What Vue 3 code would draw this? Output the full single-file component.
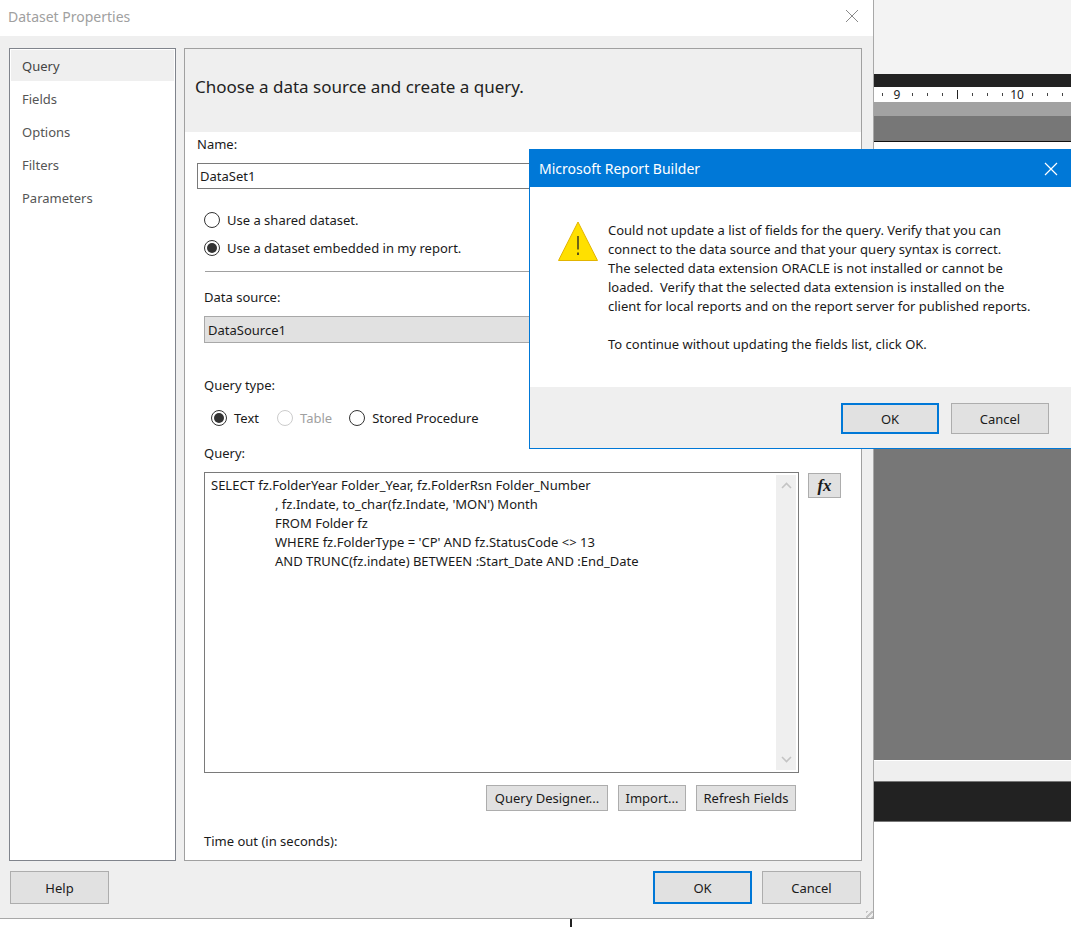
<script setup>
const navItems = ['Query', 'Fields', 'Options', 'Filters', 'Parameters']

const queryLines = [
  { text: 'SELECT fz.FolderYear Folder_Year, fz.FolderRsn Folder_Number', indent: false },
  { text: ', fz.Indate, to_char(fz.Indate, \'MON\') Month', indent: true },
  { text: 'FROM Folder fz', indent: true },
  { text: 'WHERE fz.FolderType = \'CP\' AND fz.StatusCode <> 13', indent: true },
  { text: 'AND TRUNC(fz.indate) BETWEEN :Start_Date AND :End_Date', indent: true }
]

// one cell every 15px, a number or a tick
const rulerCells = ['', '9', '', '', '', '|', '', '', '', '10', '', '', '']
</script>

<template>
  <div class="desktop">
    <!-- report builder window behind the dialogs -->
    <div class="backdrop">
      <div class="bd-top"></div>
      <div class="bd-black"></div>
      <div class="ruler">
        <div v-for="(cell, i) in rulerCells" :key="i" class="ruler-cell">
          <i v-if="cell === ''" class="tick"></i>
          <i v-else-if="cell === '|'" class="tick tall"></i>
          <span v-else class="ruler-num">{{ cell }}</span>
        </div>
      </div>
      <div class="bd-gray"></div>
      <div class="bd-dark-top"></div>
      <div class="bd-gap"></div>
      <div class="bd-dark"></div>
      <div class="bd-light"></div>
      <div class="bd-footer"></div>
    </div>
    <div class="stem"></div>

    <!-- Dataset Properties -->
    <div class="dialog">
      <div class="dialog-title">
        <span>Dataset Properties</span>
        <svg class="close" width="14" height="14" viewBox="0 0 14 14">
          <path d="M1 1 L13 13 M13 1 L1 13" stroke="#8a8a8a" stroke-width="1" fill="none" />
        </svg>
      </div>
      <div class="dialog-body">
        <div class="columns">
          <nav class="nav">
            <div
              v-for="(item, i) in navItems"
              :key="item"
              class="nav-item"
              :class="{ active: i === 0 }"
            >{{ item }}</div>
          </nav>
          <section class="panel">
            <div class="panel-head">Choose a data source and create a query.</div>
            <div class="panel-body">
              <div class="label name-label">Name:</div>
              <div class="input">DataSet1</div>
              <div class="radios">
                <label class="radio"><i class="dot"></i>Use a shared dataset.</label>
                <label class="radio"><i class="dot on"></i>Use a dataset embedded in my report.</label>
              </div>
              <div class="rule"></div>
              <div class="inset">
                <div class="label source-label">Data source:</div>
                <div class="select">DataSource1</div>
                <div class="label type-label">Query type:</div>
                <div class="type-row">
                  <label class="radio"><i class="dot on"></i>Text</label>
                  <label class="radio off"><i class="dot"></i>Table</label>
                  <label class="radio"><i class="dot"></i>Stored Procedure</label>
                </div>
                <div class="label query-label">Query:</div>
                <div class="query-row">
                  <div class="query">
                    <div class="query-text">
                      <div
                        v-for="(line, i) in queryLines"
                        :key="i"
                        class="query-line"
                        :class="{ indent: line.indent }"
                      >{{ line.text }}</div>
                    </div>
                    <div class="scrollbar">
                      <svg width="11" height="7" viewBox="0 0 11 7">
                        <path d="M1 6 L5.5 1.5 L10 6" stroke="#c4c4c4" stroke-width="1.6" fill="none" />
                      </svg>
                      <svg width="11" height="7" viewBox="0 0 11 7">
                        <path d="M1 1 L5.5 5.5 L10 1" stroke="#c4c4c4" stroke-width="1.6" fill="none" />
                      </svg>
                    </div>
                  </div>
                  <button class="btn fx">fx</button>
                </div>
                <div class="query-actions">
                  <button class="btn small designer">Query Designer...</button>
                  <button class="btn small import">Import...</button>
                  <button class="btn small refresh">Refresh Fields</button>
                </div>
                <div class="label timeout-label">Time out (in seconds):</div>
              </div>
            </div>
          </section>
        </div>
        <div class="dialog-footer">
          <button class="btn wide">Help</button>
          <div class="footer-right">
            <button class="btn wide primary">OK</button>
            <button class="btn wide">Cancel</button>
          </div>
        </div>
        <div class="grip"></div>
      </div>
    </div>

    <!-- message box -->
    <div class="msgbox">
      <div class="msg-title">
        <span>Microsoft Report Builder</span>
        <svg class="msg-close" width="14" height="14" viewBox="0 0 14 14">
          <path d="M1 1 L13 13 M13 1 L1 13" stroke="#fff" stroke-width="1.2" fill="none" />
        </svg>
      </div>
      <div class="msg-body">
        <svg class="warn" width="40" height="40" viewBox="0 0 40 40">
          <path d="M20 1 L39.5 39.5 L0.5 39.5 Z" fill="#ffe000" stroke="#e2b400" stroke-width="1" />
          <path d="M20 15 V28.5" stroke="#222" stroke-width="1.3" />
          <path d="M20 31.5 V34" stroke="#222" stroke-width="1.5" />
        </svg>
        <div class="msg-text">
          <p>Could not update a list of fields for the query. Verify that you can<br>connect to the data source and that your query syntax is correct.<br>The selected data extension ORACLE is not installed or cannot be<br>loaded.&nbsp; Verify that the selected data extension is installed on the<br>client for local reports and on the report server for published reports.</p>
          <p>To continue without updating the fields list, click OK.</p>
        </div>
      </div>
      <div class="msg-footer">
        <button class="btn msg-btn primary">OK</button>
        <button class="btn msg-btn">Cancel</button>
      </div>
    </div>
  </div>
</template>

<style>
html, body {
  margin: 0;
  background: #fff;
}
</style>

<style scoped>
.desktop {
  position: relative;
  width: 1071px;
  height: 927px;
  overflow: hidden;
  background: #fff;
  font-family: "Noto Sans", "Open Sans", sans-serif;
  font-size: 13px;
  color: #1a1a1a;
}

/* window in the back */
.backdrop {
  margin-left: 874px;
  display: flex;
  flex-direction: column;
}
.bd-top { height: 74px; background: #f3f3f3; }
.bd-black { height: 13px; background: #222; }
.ruler {
  height: 15px;
  background: #fff;
  display: flex;
  padding-left: 1px;
  overflow: hidden;
}
.ruler-cell {
  flex: none;
  width: 15px;
  display: flex;
  align-items: center;
  justify-content: center;
}
.ruler-num { font-size: 12px; line-height: 15px; color: #222; margin-left: -1px; }
.tick { display: block; width: 1px; height: 3px; background: #444; }
.tick.tall { height: 9px; background: #222; }
.bd-gray { height: 14px; background: #a2a2a2; }
.bd-dark-top { height: 26px; box-sizing: border-box; background: #777; border-bottom: 1px solid #111; }
.bd-gap { height: 7px; background: #fff; }
.bd-dark { height: 611px; background: #777; }
.bd-light { height: 21px; background: #efefef; border-top: 1px solid #fff; box-sizing: border-box; }
.bd-footer {
  height: 41px;
  box-sizing: border-box;
  background: #222;
  border-top: 1px solid #777;
  border-bottom: 1px solid #777;
}
.stem {
  position: absolute;
  left: 570px;
  top: 918px;
  width: 2px;
  height: 9px;
  background: #222;
}

/* Dataset Properties */
.dialog {
  position: absolute;
  left: 0;
  top: 0;
  width: 874px;
  height: 919px;
  box-sizing: border-box;
  border-right: 1px solid #a8a8a8;
  border-bottom: 1px solid #a8a8a8;
  display: flex;
  flex-direction: column;
  background: #efefef;
}
.dialog-title {
  height: 36px;
  flex: none;
  background: #fff;
  display: flex;
  align-items: center;
  justify-content: space-between;
  padding: 0 14px 4px 8px;
  box-sizing: border-box;
  color: #a0a0a0;
  font-size: 14px;
}
.dialog-body {
  position: relative;
  flex: 1;
  display: flex;
  flex-direction: column;
  padding: 12px 11px 13px 9px;
  min-height: 0;
}
.columns {
  flex: none;
  height: 813px;
  display: flex;
  gap: 8px;
}
.nav {
  flex: none;
  width: 167px;
  box-sizing: border-box;
  background: #fff;
  border: 1px solid #80848c;
  padding: 1px;
}
.nav-item {
  height: 33px;
  line-height: 33px;
  padding-left: 11px;
  color: #555;
}
.nav-item.active {
  height: 31px;
  line-height: 33px;
  margin-bottom: 2px;
  background: #efefef;
  color: #444;
}
.panel {
  flex: none;
  width: 678px;
  box-sizing: border-box;
  background: #fff;
  border: 1px solid #a0a0a0;
  display: flex;
  flex-direction: column;
}
.panel-head {
  height: 83px;
  flex: none;
  background: #efefef;
  padding: 27px 0 0 10px;
  box-sizing: border-box;
  font-size: 17px;
  line-height: 22px;
  color: #222;
}
.panel-body {
  padding: 0 11px 0 12px;
}
.label { line-height: 18px; color: #1a1a1a; }
.name-label { margin-top: 3px; }
.input {
  margin-top: 10px;
  height: 26px;
  line-height: 24px;
  box-sizing: border-box;
  border: 1px solid #7a7a7a;
  padding-left: 2px;
}
.radios {
  margin-top: 22px;
  margin-left: 7px;
  display: flex;
  flex-direction: column;
  gap: 10px;
}
.radio {
  display: flex;
  align-items: center;
  height: 18px;
  gap: 7px;
}
.radio.off { color: #a0a0a0; margin-right: -1px; }
.radio.off .dot { border-color: #ccc; }
.dot {
  display: block;
  position: relative;
  width: 16px;
  height: 16px;
  box-sizing: border-box;
  border: 1px solid #333;
  border-radius: 50%;
  background: #fff;
}
.dot.on::after {
  content: "";
  position: absolute;
  left: 2px;
  top: 2px;
  width: 10px;
  height: 10px;
  border-radius: 50%;
  background: #333;
}
.rule {
  margin: 14px 0 0 8px;
  height: 1px;
  background: #a0a0a0;
}
.inset { padding-left: 7px; }
.source-label { margin-top: 16px; }
.select {
  margin-top: 10px;
  height: 27px;
  line-height: 27px;
  box-sizing: border-box;
  border: 1px solid #a8a8a8;
  background: #e1e1e1;
  padding-left: 3px;
}
.type-label { margin-top: 33px; }
.type-row {
  margin-top: 15px;
  margin-left: 7px;
  display: flex;
  gap: 18px;
}
.query-label { margin-top: 17px; }
.query-row {
  margin-top: 10px;
  display: flex;
  align-items: flex-start;
  gap: 9px;
}
.query {
  width: 595px;
  height: 301px;
  box-sizing: border-box;
  border: 1px solid #7a7a7a;
  background: #fff;
  display: flex;
  padding: 2px;
}
.query-text {
  flex: 1;
  padding: 1px 0 0 4px;
  line-height: 19px;
}
.query-line { white-space: pre; }
.query-line.indent { padding-left: 64px; }
.scrollbar {
  width: 20px;
  background: #efefef;
  display: flex;
  flex-direction: column;
  align-items: center;
  justify-content: space-between;
  padding: 7px 0;
  box-sizing: border-box;
}
.btn {
  font: inherit;
  color: #1a1a1a;
  background: #e1e1e1;
  border: 1px solid #adadad;
  padding: 0;
  box-sizing: border-box;
}
.btn.primary { border: 2px solid #0078d7; }
.fx {
  width: 33px;
  height: 25px;
  margin-top: 1px;
  font-family: "Liberation Serif", serif;
  font-weight: 700;
  font-style: italic;
  font-size: 17px;
  line-height: 20px;
}
.query-actions {
  margin-top: 12px;
  margin-right: 54px;
  display: flex;
  justify-content: flex-end;
  gap: 10px;
}
.small { height: 26px; }
.designer { width: 122px; }
.import { width: 68px; }
.refresh { width: 100px; }
.timeout-label { margin-top: 21px; }
.dialog-footer {
  margin-top: 10px;
  display: flex;
  justify-content: space-between;
  padding: 0 1px;
}
.footer-right { display: flex; gap: 10px; }
.wide { width: 99px; height: 33px; }
.grip {
  position: absolute;
  right: 0;
  bottom: 0;
  width: 7px;
  height: 7px;
  background: repeating-linear-gradient(135deg, #c4c4c4 0 2px, transparent 2px 4px);
}

/* message box */
.msgbox {
  position: absolute;
  left: 529px;
  top: 149px;
  width: 544px;
  height: 300px;
  box-sizing: border-box;
  border: 1px solid #0078d7;
  background: #fff;
  display: flex;
  flex-direction: column;
}
.msg-title {
  height: 37px;
  flex: none;
  background: #0078d7;
  color: #fff;
  font-size: 14px;
  display: flex;
  align-items: center;
  justify-content: space-between;
  padding: 0 14px 0 9px;
}
.msg-body {
  flex: 1;
  display: flex;
  padding: 34px 0 0 28px;
}
.warn { flex: none; margin-right: 10px; }
.msg-text {
  line-height: 19px;
  white-space: nowrap;
}
.msg-text p { margin: 0 0 19px; }
.msg-footer {
  height: 61px;
  flex: none;
  background: #efefef;
  display: flex;
  justify-content: flex-end;
  gap: 12px;
  padding: 16px 23px 0 0;
  box-sizing: border-box;
}
.msg-btn { width: 98px; height: 31px; }
</style>
